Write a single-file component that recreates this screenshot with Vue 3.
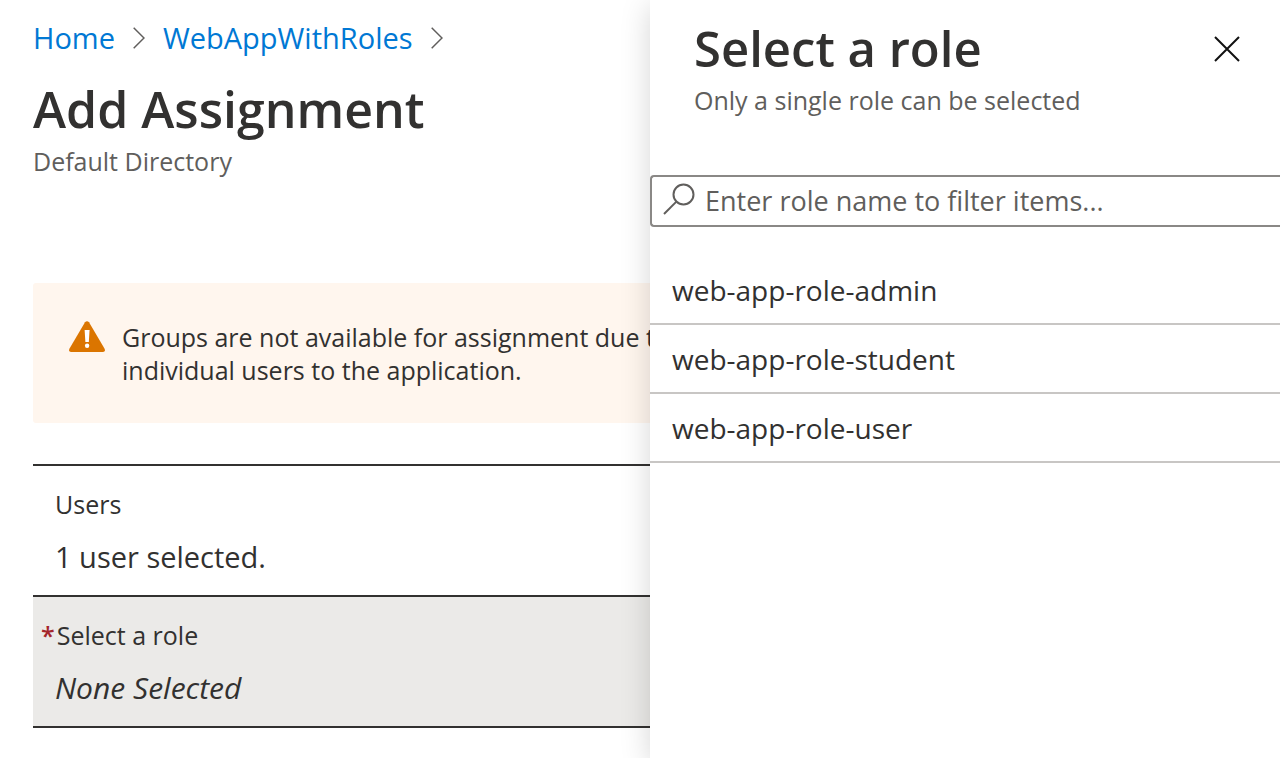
<script setup>
import { ref, computed } from 'vue'

const roles = ['web-app-role-admin', 'web-app-role-student', 'web-app-role-user']
const breadcrumbs = ['Home', 'WebAppWithRoles']

const search = ref('')
const selectedRole = ref('')
const panelOpen = ref(true)

const filteredRoles = computed(() =>
  roles.filter((r) => r.includes(search.value.trim().toLowerCase()))
)
</script>

<template>
  <div class="page" :class="{ 'with-panel': panelOpen }">
    <main class="blade">
      <nav class="breadcrumbs" aria-label="Breadcrumb">
        <template v-for="b in breadcrumbs" :key="b">
          <a href="#">{{ b }}</a>
          <svg class="chevron" viewBox="0 0 12 22" aria-hidden="true">
            <path d="M0.7 0.7 L11 11 L0.7 21.3" />
          </svg>
        </template>
      </nav>

      <h1>Add Assignment</h1>
      <p class="subtitle">Default Directory</p>

      <div class="alert" role="status">
        <svg class="warning" viewBox="0 0 36 31" aria-hidden="true">
          <path
            class="triangle"
            d="M16 1.2 Q18 -0.9 20 1.2 L35.6 27.8 Q36.6 31 34 31 H2 Q-0.6 31 0.4 27.8 Z"
          />
          <path class="mark" d="M15.6 9 H20.6 L19.8 21 H16.4 Z" />
          <circle class="mark" cx="18.1" cy="24.8" r="2.2" />
        </svg>
        <p>
          Groups are not available for assignment due t<br />
          individual users to the application.
        </p>
      </div>

      <div class="fields">
        <button class="field" type="button">
          <span class="label">Users</span>
          <span class="value">1 user selected.</span>
        </button>
        <button class="field active" type="button" @click="panelOpen = true">
          <span class="label required"><span class="star">*</span>Select a role</span>
          <span class="value" :class="{ none: !selectedRole }">{{
            selectedRole || 'None Selected'
          }}</span>
        </button>
      </div>
    </main>

    <aside v-if="panelOpen" class="panel">
      <header class="panel-header">
        <div>
          <h2>Select a role</h2>
          <p class="subtitle">Only a single role can be selected</p>
        </div>
        <button class="close" type="button" aria-label="Close" @click="panelOpen = false">
          <svg viewBox="0 0 28 28" aria-hidden="true">
            <path d="M2 2 L26 26 M26 2 L2 26" />
          </svg>
        </button>
      </header>

      <label class="search">
        <svg viewBox="0 0 32 32" aria-hidden="true">
          <circle cx="20.5" cy="11.5" r="10" />
          <path d="M13.4 18.6 L1 31" />
        </svg>
        <input
          v-model="search"
          type="text"
          aria-label="Filter roles"
          placeholder="Enter role name to filter items..."
        />
      </label>

      <ul class="roles">
        <li v-for="r in filteredRoles" :key="r">
          <button type="button" @click="selectedRole = r">{{ r }}</button>
        </li>
      </ul>
    </aside>
  </div>
</template>

<style>
body {
  margin: 0;
  background: #fff;
}
</style>

<style scoped>
.page {
  display: grid;
  grid-template-columns: minmax(0, 1fr);
  min-height: 100vh;
  overflow: hidden;
  color: #323130;
  font-family: 'Segoe UI', 'Open Sans', 'Noto Sans', sans-serif;
}

.page.with-panel {
  grid-template-columns: minmax(0, 65fr) minmax(0, 63fr);
}

h1,
h2,
p,
ul {
  margin: 0;
  padding: 0;
}

button {
  padding: 0;
  border: none;
  background: none;
  color: inherit;
  font: inherit;
  text-align: left;
  cursor: pointer;
}

h1,
h2 {
  font-size: 50px;
  font-weight: 600;
  line-height: 68px;
  white-space: nowrap;
}

h2 {
  font-size: 49px;
}

.subtitle {
  color: #605e5c;
  font-size: 25px;
  line-height: 36px;
}

.blade {
  padding: 18px 0 30px 33px;
  overflow: hidden;
}

.breadcrumbs {
  display: flex;
  align-items: center;
  gap: 18px;
  margin-bottom: 17px;
  font-size: 29px;
  line-height: 40px;
}

.breadcrumbs a {
  color: #0078d4;
  text-decoration: none;
}

.breadcrumbs a:hover {
  text-decoration: underline;
}

.chevron {
  width: 12px;
  height: 22px;
  fill: none;
  stroke: #605e5c;
  stroke-width: 1.5;
}

.alert {
  display: flex;
  gap: 17px;
  margin-top: 104px;
  padding: 38px 0 36px 36px;
  border-radius: 3px 0 0 3px;
  background: #fff6ee;
  font-size: 25px;
  line-height: 33px;
  white-space: nowrap;
}

.warning {
  flex: none;
  width: 36px;
  height: 31px;
}

.triangle {
  fill: #db7500;
}

.mark {
  fill: #fff;
}

.fields {
  margin-top: 41px;
  border-top: 2px solid #323130;
}

.field {
  display: block;
  width: 100%;
  padding: 18px 0 16px 22px;
  border-bottom: 2px solid #323130;
}

.field.active {
  background: #ebeae8;
}

.label,
.value {
  display: block;
}

.label {
  font-size: 25px;
  line-height: 40px;
}

.label.required {
  margin-left: -14px;
}

.star {
  margin-right: 2px;
  color: #a4262c;
  font-weight: 600;
}

.value {
  padding-top: 11px;
  font-size: 29px;
  line-height: 44px;
}

.value.none {
  font-size: 30px;
  font-style: italic;
}

.panel {
  z-index: 1;
  background: #fff;
  box-shadow: 0 6px 28px rgba(0, 0, 0, 0.17);
}

.panel-header {
  display: flex;
  justify-content: space-between;
  align-items: flex-start;
  padding: 14px 39px 57px 44px;
}

.close {
  display: flex;
  margin-top: 21px;
}

.close svg {
  width: 28px;
  height: 28px;
  fill: none;
  stroke: #111;
  stroke-width: 2;
}

.search {
  display: flex;
  align-items: center;
  gap: 10px;
  height: 48px;
  padding-left: 11px;
  border: 2px solid #8a8886;
  border-right: none;
  border-radius: 4px 0 0 4px;
}

.search svg {
  flex: none;
  width: 32px;
  height: 32px;
  margin-bottom: 4px;
  fill: none;
  stroke: #605e5c;
  stroke-width: 2;
}

.search input {
  flex: 1;
  min-width: 0;
  height: 40px;
  margin-bottom: 2px;
  padding: 0;
  border: none;
  outline: none;
  background: none;
  color: inherit;
  font: inherit;
  font-size: 27px;
}

.search input::placeholder {
  color: #605e5c;
  opacity: 1;
}

.roles {
  margin-top: 29px;
  list-style: none;
}

.roles li {
  border-bottom: 2px solid #c8c6c4;
}

.roles button {
  display: block;
  width: 100%;
  padding: 14px 22px 13px;
  font-size: 28px;
  line-height: 40px;
}

.roles button:hover {
  background: #f3f2f1;
}
</style>
